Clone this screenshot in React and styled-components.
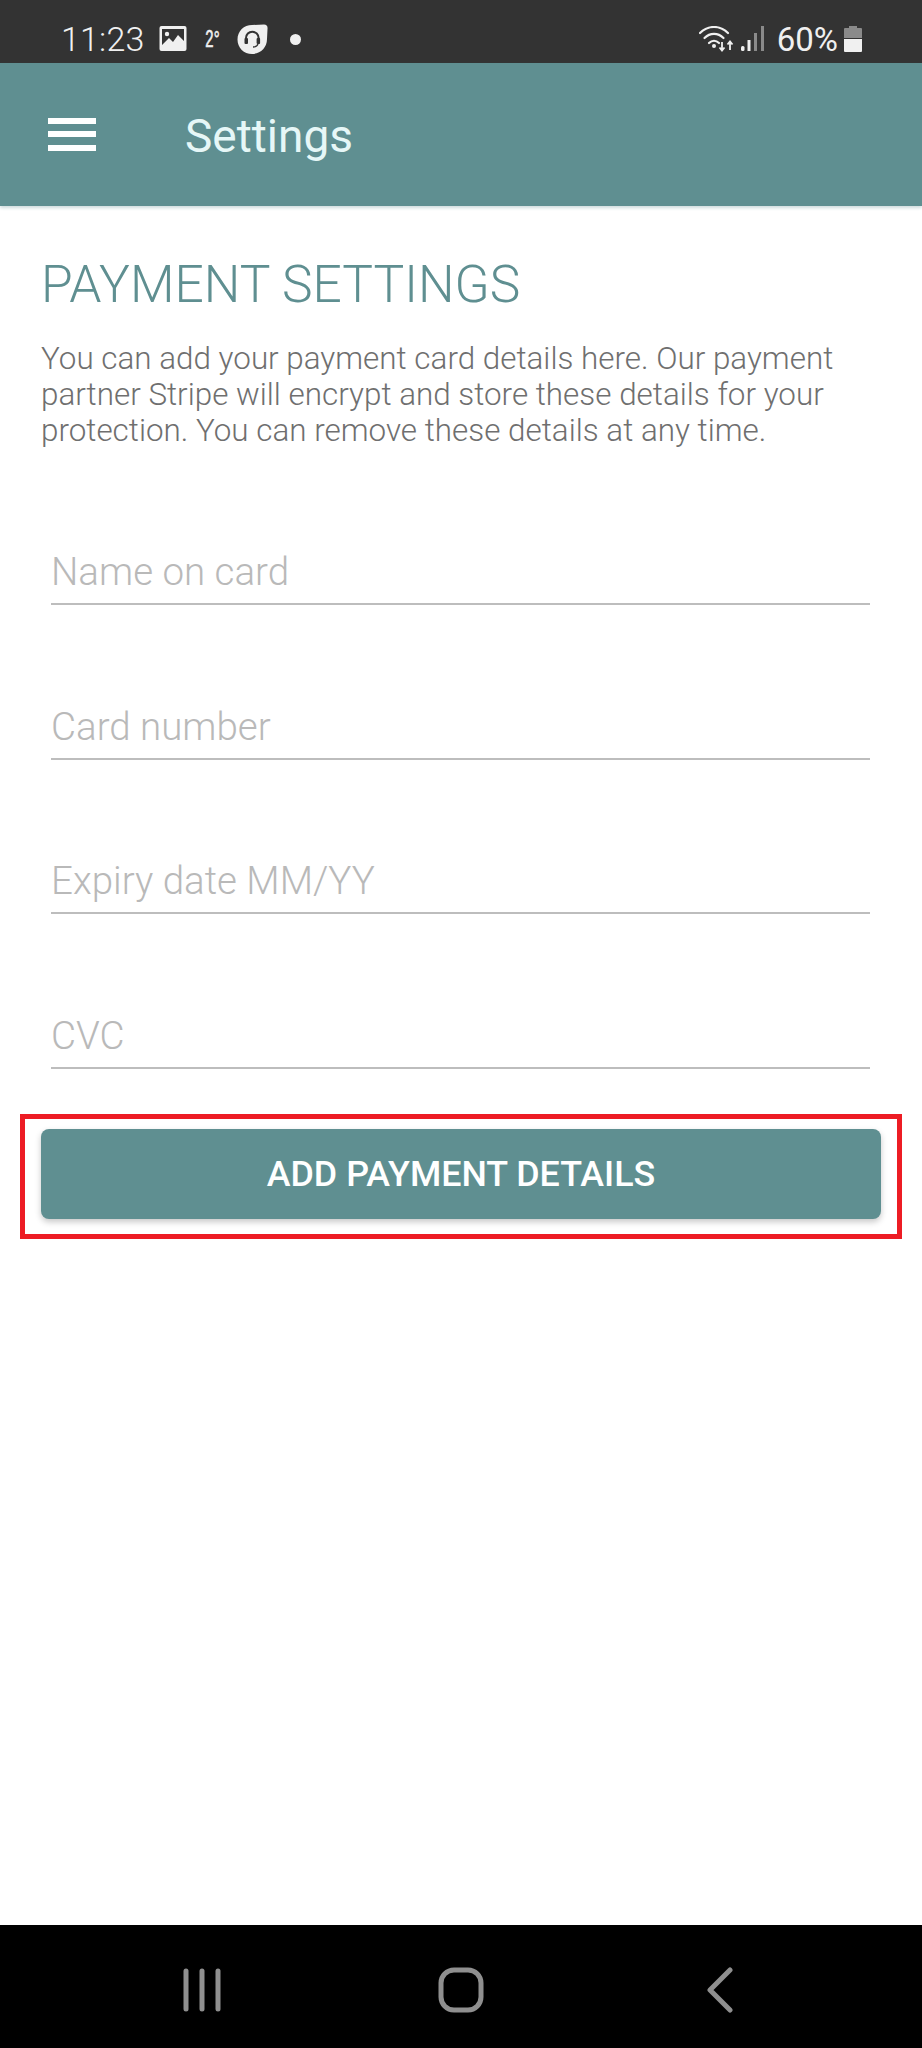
import React from 'react';
import styled, {createGlobalStyle} from 'styled-components';

const GlobalStyle = createGlobalStyle`
  html, body {
    margin: 0;
    padding: 0;
    background: #ffffff;
  }
  * {
    box-sizing: border-box;
  }
`

const Page = styled.div`
  width: 922px;
  height: 2048px;
  display: flex;
  flex-direction: column;
  overflow: hidden;
  background: #ffffff;
  font-family: Roboto, "Liberation Sans", sans-serif;
`

const StatusBar = styled.div`
  height: 63px;
  flex-shrink: 0;
  background: #333333;
  display: flex;
  align-items: center;
  justify-content: space-between;
  padding: 15px 60px 0 61px;
  color: #f0f0f0;
`

const StatusGroup = styled.div`
  display: flex;
  align-items: center;
  height: 100%;
`

const Time = styled.span`
  font-size: 34px;
  font-weight: 300;
  letter-spacing: 0.2px;
  margin-right: 14px;
  line-height: 1;
`

const Temp = styled.span`
  font-family: "Liberation Sans", Roboto, sans-serif;
  font-size: 24px;
  font-weight: 400;
  margin: 0 13px 0 14px;
  transform: scaleX(0.62);
  -webkit-text-stroke: 0.6px #f0f0f0;
`

const Percent = styled.span`
  font-size: 33px;
  font-weight: 400;
  line-height: 1;
  margin: 0 6px 0 12px;
`

const Dot = styled.span`
  width: 11px;
  height: 11px;
  border-radius: 50%;
  background: #f0f0f0;
  margin: 0 0 0 22px;
`

const AppBar = styled.header`
  height: 143px;
  flex-shrink: 0;
  background: #5f8f91;
  display: flex;
  align-items: center;
  padding: 0 0 0 48px;
  box-shadow: 0 2px 3px rgba(95, 143, 145, 0.3);
`

const Burger = styled.div`
  width: 48px;
  height: 33px;
  display: flex;
  flex-direction: column;
  justify-content: space-between;
  margin-right: 89px;
  margin-top: -1px;
`

const BurgerLine = styled.span`
  height: 6px;
  background: #ffffff;
`

const Title = styled.h1`
  margin: 0;
  font-size: 46px;
  font-weight: 400;
  color: #e6f7f7;
  line-height: 1;
  padding-top: 3px;
`

const Content = styled.main`
  flex: 1;
  padding: 51px 41px 0;
  display: flex;
  flex-direction: column;
`

const Heading = styled.h2`
  margin: 0;
  font-size: 51.5px;
  font-weight: 300;
  color: #5f8f91;
  line-height: 56px;
`

const Intro = styled.p`
  margin: 28px 0 0;
  font-size: 31.4px;
  font-weight: 300;
  color: #6f6f6f;
  line-height: 36px;
`

const Fields = styled.div`
  display: flex;
  flex-direction: column;
  gap: 100.5px;
  margin: 102px 11px 0 10px;
`

const Field = styled.div`
  height: 54px;
  border-bottom: 2px solid #bdbdbd;
  font-size: 38.5px;
  font-weight: 300;
  color: #b9b9b9;
  line-height: 42px;
`

const Highlight = styled.div`
  margin: 45.5px -21px 0;
  height: 125px;
  border: 5px solid #ed1c24;
  padding: 10px 16px;
`

const PayButton = styled.button`
  width: 100%;
  height: 90px;
  border: none;
  border-radius: 8px;
  background: #5f8f91;
  color: #ffffff;
  font-family: Roboto, "Liberation Sans", sans-serif;
  font-size: 35.8px;
  font-weight: 500;
  box-shadow: 0 3px 6px rgba(0, 0, 0, 0.22);
`

const NavBar = styled.nav`
  height: 123px;
  flex-shrink: 0;
  background: #000000;
  display: grid;
  grid-template-columns: 422px 100px 1fr;
  align-items: center;
`

const NavSlot = styled.div`
  display: flex;
  justify-content: flex-start;
  padding-left: ${props => props.inset || 0};
  padding-top: 7px;
`

const PictureIcon = () => (
    <svg width="28" height="26" viewBox="0 0 28 26">
        <rect width="27" height="25" x="0.5" rx="2" fill="#f0f0f0"/>
        <rect x="3" y="3" width="22" height="18" fill="#333333"/>
        <circle cx="8" cy="8" r="2.2" fill="#f0f0f0"/>
        <path d="M3 19 L10 12 L14 16 L19 9 L25 15 L25 21 L3 21 Z" fill="#f0f0f0"/>
    </svg>
)

const HeadsetIcon = () => (
    <svg width="31" height="31" viewBox="0 0 31 31">
        <path d="M15 1 L27 0.5 Q31 0.5 30.5 5 L30 15 C30 24 23 30 15 30 C7 30 0.5 24 0.5 15.5 C0.5 7 7 1 15 1 Z" fill="#f0f0f0"/>
        <path d="M9 18 V14 A6.3 6.3 0 0 1 21.6 14 V18" fill="none" stroke="#333333" strokeWidth="2"/>
        <rect x="7.5" y="14" width="3.5" height="6" rx="1" fill="#333333"/>
        <rect x="19.6" y="14" width="3.5" height="6" rx="1" fill="#333333"/>
        <path d="M21 20 Q20 23 16 23" fill="none" stroke="#333333" strokeWidth="1.3"/>
    </svg>
)

const WifiIcon = () => (
    <svg width="36" height="26" viewBox="0 0 36 26">
        <g fill="none" stroke="#f0f0f0" strokeWidth="2.2" strokeLinecap="round">
            <path d="M1 7 C9 -1 21 -1 29 7"/>
            <path d="M5.5 12 C11 6.5 19 6.5 24.5 12"/>
            <path d="M10 17 C13 14 17 14 20 17"/>
        </g>
        <circle cx="15" cy="20" r="2" fill="#f0f0f0"/>
        <g fill="none" stroke="#f0f0f0" strokeWidth="1.8">
            <path d="M23 16 V24 M20.5 21.5 L23 24.5 L25.5 21.5"/>
            <path d="M31 24 V16 M28.5 18.5 L31 15.5 L33.5 18.5"/>
        </g>
    </svg>
)

const SignalIcon = () => (
    <svg width="24" height="26" viewBox="0 0 24 26" style={{marginLeft: 6}}>
        <rect x="0" y="20" width="3.5" height="5" rx="1.5" fill="#f0f0f0"/>
        <rect x="6.5" y="14" width="3" height="11" fill="#f0f0f0"/>
        <rect x="13" y="7" width="3" height="18" fill="#8a8a8a"/>
        <rect x="20" y="0" width="3" height="25" fill="#8a8a8a"/>
    </svg>
)

const BatteryIcon = () => (
    <svg width="18" height="27" viewBox="0 0 18 27">
        <path d="M5 0 H13 V2 H17 Q18 2 18 3 V12 H0 V3 Q0 2 1 2 H5 Z" fill="#8a8a8a"/>
        <path d="M0 13 H18 V25 Q18 26 17 26 H1 Q0 26 0 25 Z" fill="#f0f0f0"/>
    </svg>
)

const RecentsIcon = () => (
    <svg width="38" height="44" viewBox="0 0 38 44">
        <g stroke="#8f8f8f" strokeWidth="5" strokeLinecap="round">
            <path d="M3 3 V41"/>
            <path d="M19 3 V41"/>
            <path d="M35 3 V41"/>
        </g>
    </svg>
)

const HomeIcon = () => (
    <svg width="46" height="46" viewBox="0 0 46 46">
        <rect x="3" y="3" width="40" height="40" rx="13" fill="none" stroke="#8f8f8f" strokeWidth="5"/>
    </svg>
)

const BackIcon = () => (
    <svg width="26" height="46" viewBox="0 0 26 46">
        <path d="M23 3 L3 23 L23 43" fill="none" stroke="#8f8f8f" strokeWidth="5" strokeLinecap="round" strokeLinejoin="round"/>
    </svg>
)

const fields = ['Name on card', 'Card number', 'Expiry date MM/YY', 'CVC']

const App = () => {
    return (
        <Page>
            <GlobalStyle/>
            <StatusBar>
                <StatusGroup>
                    <Time>11:23</Time>
                    <PictureIcon/>
                    <Temp>2°</Temp>
                    <HeadsetIcon/>
                    <Dot/>
                </StatusGroup>
                <StatusGroup>
                    <WifiIcon/>
                    <SignalIcon/>
                    <Percent>60%</Percent>
                    <BatteryIcon/>
                </StatusGroup>
            </StatusBar>
            <AppBar>
                <Burger>
                    <BurgerLine/>
                    <BurgerLine/>
                    <BurgerLine/>
                </Burger>
                <Title>Settings</Title>
            </AppBar>
            <Content>
                <Heading>PAYMENT SETTINGS</Heading>
                <Intro>
                    You can add your payment card details here. Our payment partner Stripe will encrypt and store
                    these details for your protection. You can remove these details at any time.
                </Intro>
                <Fields>
                    {fields.map(field => <Field key={field}>{field}</Field>)}
                </Fields>
                <Highlight>
                    <PayButton>ADD PAYMENT DETAILS</PayButton>
                </Highlight>
            </Content>
            <NavBar>
                <NavSlot inset="183px"><RecentsIcon/></NavSlot>
                <NavSlot inset="16px"><HomeIcon/></NavSlot>
                <NavSlot inset="185px"><BackIcon/></NavSlot>
            </NavBar>
        </Page>
    );
};

export default App;
